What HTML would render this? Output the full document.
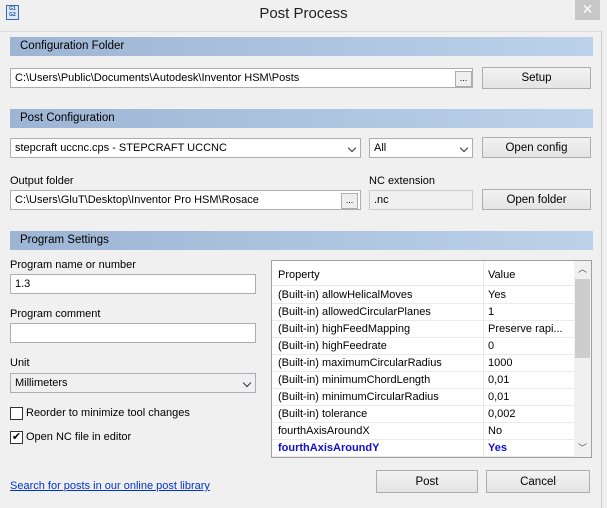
<!DOCTYPE html><html><head><style>
body{margin:0;width:607px;height:508px;background:#f0f0f0;font-family:"Liberation Sans",sans-serif;font-size:11px;color:#000;position:relative;overflow:hidden}
div,span{position:absolute;box-sizing:border-box}
.bar{left:10px;width:583px;height:19px;background:linear-gradient(90deg,#9db5d4,#bcd2ea);padding:3px 0 0 10px;font-size:11.5px}
.in{background:#fff;border:1px solid #abadb3;height:20px;padding:3px 0 0 4px;white-space:nowrap}
.btn{background:linear-gradient(#f2f2f2,#e4e4e4);border:1px solid #adadad;height:21px;text-align:center;padding-top:4px;font-size:11.5px}
.dots{width:17px;height:16px;border:1px solid #adadad;background:#eee;font-size:9px;text-align:center;line-height:12px}
.sel::after{content:"";position:absolute;right:5px;top:6px;width:5px;height:5px;border-right:1.5px solid #333;border-bottom:1.5px solid #333;transform:rotate(45deg)}
.row{left:0;width:302px;height:17px;border-bottom:1px solid #eaeaea}
.row span{top:2px}
.lbl{font-size:11px}
.cb{width:13px;height:13px;border:1px solid #333;background:#fff}
</style></head><body>
<div style="left:0;top:0;width:607px;height:30px;background:#f0f0f0"></div>
<div style="left:6px;top:5px;width:13px;height:15px;border:1px solid #3a6ab0;background:#dde8f8;font-size:5px;line-height:6px;color:#2050a0;text-align:center;font-weight:bold">G1<br>G2</div>
<div style="left:0;width:607px;top:5px;text-align:center;font-size:15px;color:#222">Post Process</div>
<div style="left:575px;top:0;width:25px;height:20px;background:#c7c7c7;color:#fff;text-align:center;font-size:14px;line-height:19px">✕</div>
<div style="left:0;top:31px;width:602px;height:477px;border-top:1px solid #ddd;border-right:1px solid #ccc"></div>

<div class="bar" style="top:37px">Configuration Folder</div>
<div class="in" style="left:10px;top:68px;width:463px;height:20px">C:\Users\Public\Documents\Autodesk\Inventor HSM\Posts</div>
<div class="dots" style="left:455px;top:71px">...</div>
<div class="btn" style="left:482px;top:67px;width:109px;height:22px">Setup</div>

<div class="bar" style="top:109px">Post Configuration</div>
<div class="in sel" style="left:10px;top:138px;width:351px">stepcraft uccnc.cps - STEPCRAFT UCCNC</div>
<div class="in sel" style="left:369px;top:138px;width:104px">All</div>
<div class="btn" style="left:482px;top:137px;width:109px">Open config</div>
<div class="lbl" style="left:10px;top:175px">Output folder</div>
<div class="lbl" style="left:369px;top:175px">NC extension</div>
<div class="in" style="left:10px;top:190px;width:351px">C:\Users\GluT\Desktop\Inventor Pro HSM\Rosace</div>
<div class="dots" style="left:341px;top:193px">...</div>
<div class="in" style="left:369px;top:190px;width:104px;background:#f0f0f0;border-color:#ccc">.nc</div>
<div class="btn" style="left:482px;top:189px;width:109px">Open folder</div>

<div class="bar" style="top:231px">Program Settings</div>
<div class="lbl" style="left:10px;top:259px">Program name or number</div>
<div class="in" style="left:10px;top:274px;width:246px">1.3</div>
<div class="lbl" style="left:10px;top:308px">Program comment</div>
<div class="in" style="left:10px;top:323px;width:246px"></div>
<div class="lbl" style="left:10px;top:357px">Unit</div>
<div class="in sel" style="left:10px;top:373px;width:246px;background:#f0f0f0">Millimeters</div>
<div class="cb" style="left:10px;top:407px"></div><div class="lbl" style="left:26px;top:407px">Reorder to minimize tool changes</div>
<div class="cb" style="left:10px;top:431px;font-size:11px;line-height:10px;text-align:center">✔</div><div class="lbl" style="left:26px;top:431px">Open NC file in editor</div>
<div style="left:10px;top:480px;color:#0033cc;text-decoration:underline">Search for posts in our online post library</div>

<div style="left:271px;top:260px;width:321px;height:198px;border:1px solid #a0a0a0;background:#fff">
<div style="left:0;top:0;width:302px;height:25px;border-bottom:1px solid #e8e8e8"><span style="left:6px;top:8px">Property</span><span style="left:216px;top:8px">Value</span></div>
<div style="left:211px;top:0;width:1px;height:196px;background:#e8e8e8"></div>
<div class="row" style="top:26px"><span style="left:6px">(Built-in) allowHelicalMoves</span><span style="left:216px">Yes</span></div>
<div class="row" style="top:43px"><span style="left:6px">(Built-in) allowedCircularPlanes</span><span style="left:216px">1</span></div>
<div class="row" style="top:60px"><span style="left:6px">(Built-in) highFeedMapping</span><span style="left:216px">Preserve rapi...</span></div>
<div class="row" style="top:77px"><span style="left:6px">(Built-in) highFeedrate</span><span style="left:216px">0</span></div>
<div class="row" style="top:94px"><span style="left:6px">(Built-in) maximumCircularRadius</span><span style="left:216px">1000</span></div>
<div class="row" style="top:111px"><span style="left:6px">(Built-in) minimumChordLength</span><span style="left:216px">0,01</span></div>
<div class="row" style="top:128px"><span style="left:6px">(Built-in) minimumCircularRadius</span><span style="left:216px">0,01</span></div>
<div class="row" style="top:145px"><span style="left:6px">(Built-in) tolerance</span><span style="left:216px">0,002</span></div>
<div class="row" style="top:162px"><span style="left:6px">fourthAxisAroundX</span><span style="left:216px">No</span></div>
<div class="row" style="top:179px;color:#1010d0;font-weight:bold"><span style="left:6px">fourthAxisAroundY</span><span style="left:216px">Yes</span></div>
<div style="left:302px;top:0;width:17px;height:196px;background:#f0f0f0"></div>
<div style="left:303px;top:18px;width:15px;height:79px;background:#cdcdcd"></div>
<div style="left:302px;top:1px;width:17px;text-align:center;font-size:9px;color:#555">︿</div>
<div style="left:302px;top:180px;width:17px;text-align:center;font-size:9px;color:#555">﹀</div>
</div>

<div class="btn" style="left:376px;top:470px;width:102px;height:23px;padding-top:5px">Post</div>
<div class="btn" style="left:486px;top:470px;width:104px;height:23px;padding-top:5px">Cancel</div>
</body></html>
